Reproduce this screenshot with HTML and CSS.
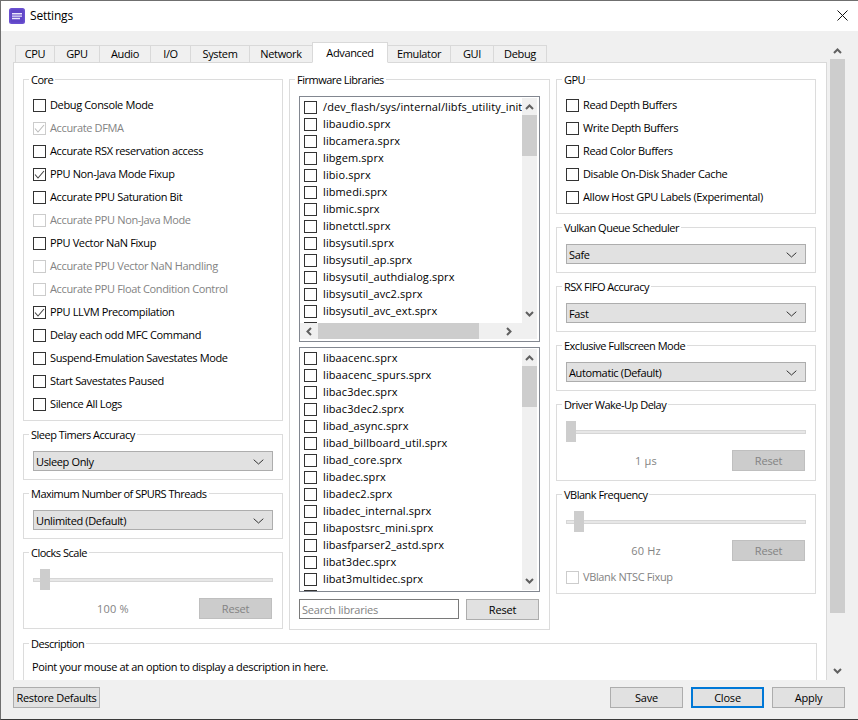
FILE: index.html
```
<!DOCTYPE html>
<html lang="en">
<head>
<meta charset="utf-8">
<title>Settings</title>
<link rel="stylesheet" href="styles.css">
</head>
<body>
<svg class="defs" width="0" height="0" aria-hidden="true">
  <symbol id="tick" viewBox="0 0 13 13"><path d="M2 6.5 5 10 11 3" fill="none" stroke="currentColor" stroke-width="1.1"/></symbol>
  <symbol id="up" viewBox="0 0 9 6"><path d="M1 5 4.5 1.5 8 5" fill="none" stroke="currentColor" stroke-width="2"/></symbol>
  <symbol id="down" viewBox="0 0 9 6"><path d="M1 1 4.5 4.5 8 1" fill="none" stroke="currentColor" stroke-width="2"/></symbol>
  <symbol id="left" viewBox="0 0 6 9"><path d="M5 1 1.5 4.5 5 8" fill="none" stroke="currentColor" stroke-width="2"/></symbol>
  <symbol id="right" viewBox="0 0 6 9"><path d="M1 1 4.5 4.5 1 8" fill="none" stroke="currentColor" stroke-width="2"/></symbol>
  <symbol id="chev" viewBox="0 0 11 6"><path d="M.7.7 5.5 5 10.3.7" fill="none" stroke="currentColor" stroke-width="1"/></symbol>
</svg>
<div class="window">
  <header class="titlebar">
    <svg class="appicon" viewBox="0 0 16 16" aria-hidden="true">
      <rect width="16" height="16" rx="2.5" fill="#6a50d0"/>
      <rect x="1.5" y="1.5" width="13" height="13" rx="1.5" fill="#5f45c6"/>
      <path d="M3 5h10v1.4H3zM3 7.4h10v1.4H3zM3 9.8h8v1.4H3z" fill="#e9e6fb"/>
    </svg>
    <span class="title">Settings</span>
    <svg class="closex" viewBox="0 0 11 11" aria-hidden="true"><path d="M.5.5 10.5 10.5M10.5.5.5 10.5" stroke="#111" fill="none"/></svg>
  </header>
  <div class="main">
    <div class="tabarea">
      <nav class="tabs">
        <span class="tab w40">CPU</span><span class="tab w45">GPU</span><span class="tab w51">Audio</span><span class="tab w40">I/O</span><span class="tab w59">System</span><span class="tab w62">Network</span><span class="tab w76 active">Advanced</span><span class="tab w63">Emulator</span><span class="tab w43">GUI</span><span class="tab w53">Debug</span>
      </nav>
      <div class="pane">
        <div class="columns">
          <div class="col">
            <fieldset class="group">
              <legend>Core</legend>
              <div class="checks">
                <label class="chk"><span class="box"></span>Debug Console Mode</label>
                <label class="chk off"><span class="box"><svg><use href="#tick"/></svg></span>Accurate DFMA</label>
                <label class="chk"><span class="box"></span>Accurate RSX reservation access</label>
                <label class="chk"><span class="box"><svg><use href="#tick"/></svg></span>PPU Non-Java Mode Fixup</label>
                <label class="chk"><span class="box"></span>Accurate PPU Saturation Bit</label>
                <label class="chk off"><span class="box"></span>Accurate PPU Non-Java Mode</label>
                <label class="chk"><span class="box"></span>PPU Vector NaN Fixup</label>
                <label class="chk off"><span class="box"></span>Accurate PPU Vector NaN Handling</label>
                <label class="chk off"><span class="box"></span>Accurate PPU Float Condition Control</label>
                <label class="chk"><span class="box"><svg><use href="#tick"/></svg></span>PPU LLVM Precompilation</label>
                <label class="chk"><span class="box"></span>Delay each odd MFC Command</label>
                <label class="chk"><span class="box"></span>Suspend-Emulation Savestates Mode</label>
                <label class="chk"><span class="box"></span>Start Savestates Paused</label>
                <label class="chk"><span class="box"></span>Silence All Logs</label>
              </div>
            </fieldset>
            <fieldset class="group">
              <legend>Sleep Timers Accuracy</legend>
              <div class="combo"><span>Usleep Only</span><svg class="chev"><use href="#chev"/></svg></div>
            </fieldset>
            <fieldset class="group">
              <legend>Maximum Number of SPURS Threads</legend>
              <div class="combo"><span>Unlimited (Default)</span><svg class="chev"><use href="#chev"/></svg></div>
            </fieldset>
            <fieldset class="group roomy">
              <legend>Clocks Scale</legend>
              <div class="slider"><span class="groove"></span><span class="handle" style="left:7px"></span></div>
              <div class="valrow"><span class="val">100 %</span><span class="btn dis">Reset</span></div>
            </fieldset>
          </div>
          <div class="col mid">
            <fieldset class="group roomy">
              <legend>Firmware Libraries</legend>
              <div class="list top">
                <div class="listbody">
                  <div class="view">
                    <label class="item"><span class="box"></span>/dev_flash/sys/internal/libfs_utility_init.sprx</label>
                    <label class="item"><span class="box"></span>libaudio.sprx</label>
                    <label class="item"><span class="box"></span>libcamera.sprx</label>
                    <label class="item"><span class="box"></span>libgem.sprx</label>
                    <label class="item"><span class="box"></span>libio.sprx</label>
                    <label class="item"><span class="box"></span>libmedi.sprx</label>
                    <label class="item"><span class="box"></span>libmic.sprx</label>
                    <label class="item"><span class="box"></span>libnetctl.sprx</label>
                    <label class="item"><span class="box"></span>libsysutil.sprx</label>
                    <label class="item"><span class="box"></span>libsysutil_ap.sprx</label>
                    <label class="item"><span class="box"></span>libsysutil_authdialog.sprx</label>
                    <label class="item"><span class="box"></span>libsysutil_avc2.sprx</label>
                    <label class="item"><span class="box"></span>libsysutil_avc_ext.sprx</label>
                    <div class="item"><span class="box"></span></div>
                  </div>
                  <div class="vbar">
                    <svg class="arrow"><use href="#up"/></svg>
                    <span class="vthumb"></span>
                    <svg class="arrow end"><use href="#down"/></svg>
                  </div>
                </div>
                <div class="hbar">
                  <svg class="harrow"><use href="#left"/></svg>
                  <span class="hthumb"></span>
                  <svg class="harrow"><use href="#right"/></svg>
                </div>
              </div>
              <div class="list bottom">
                <div class="listbody">
                  <div class="view">
                    <label class="item"><span class="box"></span>libaacenc.sprx</label>
                    <label class="item"><span class="box"></span>libaacenc_spurs.sprx</label>
                    <label class="item"><span class="box"></span>libac3dec.sprx</label>
                    <label class="item"><span class="box"></span>libac3dec2.sprx</label>
                    <label class="item"><span class="box"></span>libad_async.sprx</label>
                    <label class="item"><span class="box"></span>libad_billboard_util.sprx</label>
                    <label class="item"><span class="box"></span>libad_core.sprx</label>
                    <label class="item"><span class="box"></span>libadec.sprx</label>
                    <label class="item"><span class="box"></span>libadec2.sprx</label>
                    <label class="item"><span class="box"></span>libadec_internal.sprx</label>
                    <label class="item"><span class="box"></span>libapostsrc_mini.sprx</label>
                    <label class="item"><span class="box"></span>libasfparser2_astd.sprx</label>
                    <label class="item"><span class="box"></span>libat3dec.sprx</label>
                    <label class="item"><span class="box"></span>libat3multidec.sprx</label>
                    <div class="item"><span class="box"></span></div>
                  </div>
                  <div class="vbar">
                    <svg class="arrow"><use href="#up"/></svg>
                    <span class="vthumb"></span>
                    <svg class="arrow end"><use href="#down"/></svg>
                  </div>
                </div>
              </div>
              <div class="searchrow">
                <span class="search">Search libraries</span>
                <span class="btn">Reset</span>
              </div>
            </fieldset>
          </div>
          <div class="col">
            <fieldset class="group">
              <legend>GPU</legend>
              <div class="checks">
                <label class="chk"><span class="box"></span>Read Depth Buffers</label>
                <label class="chk"><span class="box"></span>Write Depth Buffers</label>
                <label class="chk"><span class="box"></span>Read Color Buffers</label>
                <label class="chk"><span class="box"></span>Disable On-Disk Shader Cache</label>
                <label class="chk"><span class="box"></span>Allow Host GPU Labels (Experimental)</label>
              </div>
            </fieldset>
            <fieldset class="group">
              <legend>Vulkan Queue Scheduler</legend>
              <div class="combo"><span>Safe</span><svg class="chev"><use href="#chev"/></svg></div>
            </fieldset>
            <fieldset class="group">
              <legend>RSX FIFO Accuracy</legend>
              <div class="combo"><span>Fast</span><svg class="chev"><use href="#chev"/></svg></div>
            </fieldset>
            <fieldset class="group">
              <legend>Exclusive Fullscreen Mode</legend>
              <div class="combo"><span>Automatic (Default)</span><svg class="chev"><use href="#chev"/></svg></div>
            </fieldset>
            <fieldset class="group roomy">
              <legend>Driver Wake-Up Delay</legend>
              <div class="slider"><span class="groove"></span><span class="handle" style="left:0"></span></div>
              <div class="valrow"><span class="val">1 µs</span><span class="btn dis">Reset</span></div>
            </fieldset>
            <fieldset class="group">
              <legend>VBlank Frequency</legend>
              <div class="slider"><span class="groove"></span><span class="handle" style="left:8px"></span></div>
              <div class="valrow"><span class="val">60 Hz</span><span class="btn dis">Reset</span></div>
              <label class="chk off fixup"><span class="box"></span>VBlank NTSC Fixup</label>
            </fieldset>
          </div>
        </div>
        <fieldset class="group desc">
          <legend>Description</legend>
          <p>Point your mouse at an option to display a description in here.</p>
        </fieldset>
      </div>
    </div>
    <div class="mainbar">
      <svg class="arrow"><use href="#up"/></svg>
      <span class="mainthumb"></span>
      <svg class="arrow end"><use href="#down"/></svg>
    </div>
  </div>
  <footer class="footer">
    <span class="btn auto">Restore Defaults</span>
    <span class="spring"></span>
    <span class="btn">Save</span>
    <span class="btn focus">Close</span>
    <span class="btn">Apply</span>
  </footer>
</div>
</body>
</html>
```
FILE: styles.css
```
* { box-sizing: border-box; }
html, body { margin: 0; height: 100%; }
body {
  font-family: "Open Sans", "Noto Sans", sans-serif;
  font-size: 11px;
  letter-spacing: -0.36px;
  line-height: 16px;
  color: #000;
  background: #f0f0f0;
  overflow: hidden;
}
.defs { position: absolute; }
.window {
  width: 858px;
  height: 720px;
  display: flex;
  flex-direction: column;
  border-top: 1px solid #6f6f6f;
  border-left: 1px solid #6f6f6f;
  border-bottom: 1px solid #3a3a3a;
  background: #f0f0f0;
}
.titlebar {
  height: 30px;
  flex: none;
  display: flex;
  align-items: center;
  background: #fff;
  padding: 0 10px 0 8px;
}
.appicon { width: 16px; height: 16px; }
.title { margin-left: 5px; font-size: 12px; letter-spacing: -0.2px; }
.closex { width: 11px; height: 11px; margin-left: auto; margin-bottom: 2px; }

.main { flex: 1; min-height: 0; display: flex; padding: 11px 13px 0 12px; gap: 3px; }
.tabarea { width: 814px; display: flex; flex-direction: column; min-height: 0; }
.tabs { height: 20px; flex: none; display: flex; align-items: flex-end; padding-left: 2px; position: relative; z-index: 1; }
.tab {
  height: 18px;
  margin-bottom: -1px;
  display: flex;
  align-items: center;
  justify-content: center;
  background: #f0f0f0;
  border: 1px solid #d9d9d9;
  border-left-width: 0;
  margin-top: 3px;
}
.tab:first-child { border-left-width: 1px; }
.w40 { width: 40px; } .w45 { width: 45px; } .w51 { width: 51px; } .w59 { width: 59px; }
.w62 { width: 63px; } .w63 { width: 63px; } .w43 { width: 43px; } .w53 { width: 53px; }
.w76 { width: 76px; }
.tab.active { height: 21px; margin-bottom: -1px; background: #fff; border-bottom-color: #fff; padding-top: 1px; margin-top: 0; border-left-width: 1px; margin-left: -1px; }
.pane {
  flex: 1;
  min-height: 0;
  overflow: hidden;
  background: #fff;
  border: 1px solid #d9d9d9;
  border-bottom: 0;
  padding: 8px 9px 0;
}
.columns { display: flex; gap: 6px; align-items: flex-start; }
.col { width: 260px; flex: none; display: flex; flex-direction: column; gap: 5px; }
.col.mid { width: 261px; }
.group {
  margin: 0;
  min-width: 0;
  border: 1px solid #dcdcdc;
  padding: 9px 9px 8px;
}
.group.roomy { padding-bottom: 9px; }
.group legend { padding: 1px 2px 0; margin-left: -4px; line-height: 15px; height: 16px; letter-spacing: -0.5px; }

.checks { display: flex; flex-direction: column; gap: 7px; padding-top: 1px; }
.chk { display: flex; align-items: center; height: 16px; gap: 4px; white-space: nowrap; }
.box {
  width: 13px;
  height: 13px;
  flex: none;
  border: 1px solid #333;
  background: #fff;
  color: #444;
  display: block;
  position: relative;
}
.box svg { position: absolute; left: -1px; top: -1px; width: 13px; height: 13px; display: block; }
.chk.off { color: #838383; }
.chk.off .box { border-color: #ccc; color: #bbb; }

.combo {
  height: 20px;
  background: #e1e1e1;
  border: 1px solid #adadad;
  display: flex;
  align-items: center;
  justify-content: space-between;
  padding: 1px 8px 0 2px;
}
.chev { width: 11px; height: 6px; color: #333; }

.slider { height: 21px; position: relative; display: flex; align-items: center; }
.groove { display: block; width: 100%; height: 4px; background: #e7e7e7; border: 1px solid #d6d6d6; }
.handle { position: absolute; top: 0; width: 10px; height: 21px; background: #cdcdcd; }
.valrow { display: flex; align-items: center; margin-top: 8px; gap: 6px; padding-right: 1px; }
.val { flex: 1; text-align: center; color: #838383; letter-spacing: 0.2px; }
.btn {
  width: 73px;
  height: 21px;
  flex: none;
  display: flex;
  align-items: center;
  justify-content: center;
  background: #e1e1e1;
  border: 1px solid #adadad;
  white-space: nowrap;
  letter-spacing: -0.2px;
}
.btn.dis { background: #ccc; border-color: #bfbfbf; color: #838383; }
.btn.auto { width: 87px; letter-spacing: -0.3px; }
.btn.focus { border: 2px solid #0078d7; }
.fixup { margin-top: 8px; }

.list { border: 1px solid #828790; background: #fff; display: flex; flex-direction: column; overflow: hidden; }
.list.top { height: 246px; }
.list.bottom { height: 245px; margin-top: 5px; }
.listbody { flex: 1; min-height: 0; display: flex; }
.view { flex: 1; min-width: 0; overflow: hidden; white-space: nowrap; padding-top: 1px; }
.item { display: flex; align-items: center; height: 17px; padding-left: 4px; gap: 6px; letter-spacing: 0.1px; }
.item .box { margin-top: 1px; }
.vbar { width: 15px; flex: none; margin: 1px 2px 0 0; background: #f0f0f0; display: flex; flex-direction: column; align-items: center; color: #606060; }
.bottom .vbar { margin-bottom: 1px; }
.arrow { width: 9px; height: 6px; margin: 6px 0 5px; flex: none; }
.arrow.end { margin-top: auto; margin-bottom: 6px; }
.vthumb { width: 15px; height: 41px; background: #cdcdcd; flex: none; }
.hbar { height: 16px; flex: none; margin: 0 2px 2px 0; background: #f0f0f0; display: flex; align-items: center; color: #606060; position: relative; }
.harrow { width: 6px; height: 9px; flex: none; margin: 0 6px; }
.hbar .harrow:last-child { position: absolute; left: 206px; margin: 0; }
.hthumb { width: 161px; height: 16px; background: #cdcdcd; }
.searchrow { display: flex; justify-content: space-between; margin-top: 7px; padding-right: 1px; align-items: flex-start; }
.search { width: 160px; height: 20px; border: 1px solid #7a7a7a; background: #fff; color: #838383; padding: 1px 2px 0; display: flex; align-items: center; letter-spacing: -0.2px; }
.group.desc { margin-top: 5px; padding: 8px 8px 40px; }
.desc legend { margin-left: -3px; }
.desc p { margin: 0; }

.mainbar { width: 15px; flex: none; display: flex; flex-direction: column; align-items: center; color: #606060; }
.mainthumb { width: 15px; height: 554px; background: #cdcdcd; flex: none; }

.footer { height: 39px; flex: none; display: flex; align-items: flex-start; padding: 7px 13px 0 12px; gap: 8px; }
.spring { flex: 1; }
```
